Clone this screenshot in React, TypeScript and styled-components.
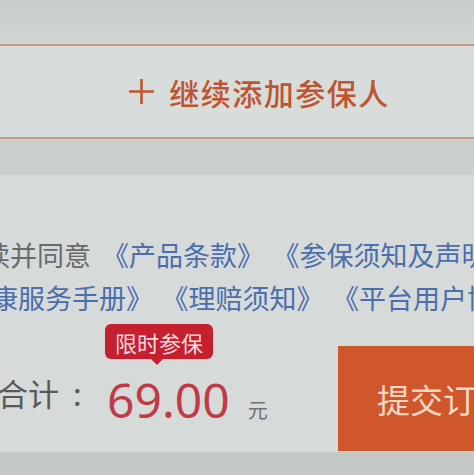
import React, { FC } from 'react';
import styled, { createGlobalStyle } from 'styled-components';

const GlobalStyle = createGlobalStyle`
  html, body {
    margin: 0;
    padding: 0;
    width: 474px;
    height: 475px;
    overflow: hidden;
    background: #cdd1d0;
  }
  * {
    box-sizing: border-box;
  }
`;

const CJK = `"Noto Sans CJK SC", "Noto Sans", sans-serif`;

interface LinkItem {
  text: string;
  open?: boolean;
  close?: boolean;
}

const firstLine: LinkItem[] = [
  { text: '《产品条款》', open: true, close: true },
  { text: '《参保须知及声明》', open: true, close: true },
];

const secondLine: LinkItem[] = [
  { text: '康服务手册》', close: true },
  { text: '《理赔须知》', open: true, close: true },
  { text: '《平台用户协议》', open: true, close: true },
];

const PlusIcon: FC = () => (
  <svg width="27" height="27" viewBox="0 0 27 27" fill="none">
    <path d="M13.5 1V26M1 13.5H26" stroke="#c0552f" strokeWidth="2.6" />
  </svg>
);

const Agreement: FC = () => (
  <AgreementBox>
    <AgreementLine $indent={-17}>
      <Plain>读并同意</Plain>
      {firstLine.map(item => (
        <Link key={item.text} $open={item.open} $close={item.close}>
          {item.text}
        </Link>
      ))}
    </AgreementLine>
    <AgreementLine $indent={-9}>
      {secondLine.map(item => (
        <Link key={item.text} $open={item.open} $close={item.close}>
          {item.text}
        </Link>
      ))}
    </AgreementLine>
  </AgreementBox>
);

export default function App() {
  return (
    <Page>
      <GlobalStyle />
      <TopStrip />
      <AddInsuredRow>
        <PlusIcon />
        <AddLabel>继续添加参保人</AddLabel>
      </AddInsuredRow>
      <Divider />
      <Content>
        <Agreement />
        <TotalBar>
          <TotalInfo>
            <TotalLabel>
              合计<Colon>:</Colon>
            </TotalLabel>
            <PriceWrap>
              <Badge>限时参保</Badge>
              <Price>69.00</Price>
            </PriceWrap>
            <Unit>元</Unit>
          </TotalInfo>
          <SubmitButton>提交订单</SubmitButton>
        </TotalBar>
      </Content>
      <BottomStrip />
    </Page>
  );
}

const Page = styled.div`
  width: 474px;
  height: 475px;
  display: flex;
  flex-direction: column;
  overflow: hidden;
  font-family: ${CJK};
`;

const TopStrip = styled.div`
  height: 44px;
  flex-shrink: 0;
  background: linear-gradient(180deg, #c9cdcc 0%, #d0d4d3 100%);
`;

const AddInsuredRow = styled.div`
  height: 95px;
  flex-shrink: 0;
  display: flex;
  align-items: center;
  justify-content: center;
  gap: 14px;
  padding-left: 44px;
  background: #d8dcdb;
  border-top: 2px solid #c6998a;
  border-bottom: 2px solid #c6998a;
`;

const AddLabel = styled.span`
  font-size: 30px;
  font-weight: 500;
  letter-spacing: 1.5px;
  line-height: 1;
  color: #bf5530;
`;

const Divider = styled.div`
  height: 36px;
  flex-shrink: 0;
  background: #cbcfce;
`;

const Content = styled.div`
  flex: 1;
  display: flex;
  flex-direction: column;
  background: #d6dad9;
`;

const AgreementBox = styled.div`
  padding-top: 58px;
  display: flex;
  flex-direction: column;
  overflow: hidden;
`;

const AgreementLine = styled.div<{ $indent: number }>`
  margin-left: ${({ $indent }) => $indent}px;
  white-space: nowrap;
  font-size: 27px;
  line-height: 43px;
`;

const Plain = styled.span`
  color: #676b6d;
`;

const Link = styled.span<{ $open?: boolean; $close?: boolean }>`
  color: #4b6ead;
  padding-left: ${({ $open }) => ($open ? 11 : 0)}px;
  padding-right: ${({ $close }) => ($close ? 11 : 0)}px;
`;

const TotalBar = styled.div`
  margin-top: 27px;
  height: 105px;
  display: flex;
`;

const TotalInfo = styled.div`
  width: 341px;
  flex-shrink: 0;
  display: flex;
  align-items: baseline;
  padding-top: 30px;
  margin-left: -3px;
`;

const TotalLabel = styled.span`
  align-self: flex-start;
  margin-top: -5px;
  font-size: 31px;
  line-height: 43px;
  color: #55595b;
  width: 110px;
  flex-shrink: 0;
`;

const Colon = styled.span`
  margin-left: 14px;
`;

const PriceWrap = styled.span`
  position: relative;
  display: inline-block;
`;

const Price = styled.span`
  font-family: "Noto Sans", sans-serif;
  font-size: 48px;
  line-height: 1;
  color: #c03a48;
`;

const Badge = styled.span`
  position: absolute;
  left: -2px;
  top: -52px;
  height: 35px;
  padding: 0 10px;
  display: flex;
  align-items: center;
  white-space: nowrap;
  border-radius: 6px;
  background: #c61f2d;
  color: #f4dde0;
  font-family: ${CJK};
  font-size: 22px;
  &::after {
    content: '';
    position: absolute;
    left: 46px;
    bottom: -6px;
    border-left: 6px solid transparent;
    border-right: 6px solid transparent;
    border-top: 6px solid #c61f2d;
  }
`;

const Unit = styled.span`
  margin-left: 18px;
  font-size: 20px;
  color: #6d7172;
`;

const SubmitButton = styled.div`
  flex: 1;
  display: flex;
  align-items: center;
  padding-left: 39px;
  white-space: nowrap;
  overflow: hidden;
  background: #d0562b;
  color: #f3d8c6;
  font-size: 33px;
`;

const BottomStrip = styled.div`
  height: 23px;
  flex-shrink: 0;
  background: #c4c8c7;
`;
